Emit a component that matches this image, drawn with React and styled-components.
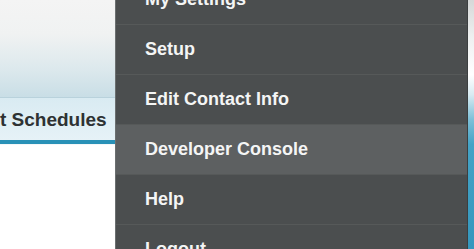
import React from "react";
import styled, { createGlobalStyle } from "styled-components";

const GlobalStyle = createGlobalStyle`
  html, body {
    margin: 0;
    padding: 0;
    background: #ffffff;
    overflow: hidden;
  }
  body {
    font-family: "Liberation Sans", Arial, Helvetica, sans-serif;
  }
`;

const Page = styled.div`
  position: relative;
  width: 474px;
  height: 249px;
  overflow: hidden;
  display: flex;
`;

const Main = styled.div`
  flex: 1;
  min-width: 0;
  display: flex;
  flex-direction: column;
`;

const Header = styled.div`
  height: 97px;
  background: linear-gradient(
    to bottom,
    #f4f4f4 0%,
    #f0f2f2 35%,
    #dde9ed 70%,
    #c9dee6 100%
  );
  border-bottom: 1px solid #b9d2dc;
`;

const TabBar = styled.div`
  height: 42px;
  display: flex;
  align-items: center;
  background: linear-gradient(to bottom, #d9ebf2 0%, #e6f2f7 100%);
  border-bottom: 4px solid #2991b7;
`;

const TabLabel = styled.span`
  font-size: 19px;
  font-weight: bold;
  color: #2e3233;
  white-space: nowrap;
  padding-top: 2px;
`;

const Body = styled.div`
  flex: 1;
  background: #ffffff;
  border-top: 1px solid #f3f7f8;
`;

const EdgeStrip = styled.div`
  flex: 0 0 6px;
  width: 6px;
  height: 100%;
  background: linear-gradient(
    to bottom,
    #d6d8d8 0%,
    #eef0f0 15%,
    #ffffff 30%,
    #d8ebf2 38%,
    #7dc0d8 48%,
    #44a3c6 58%,
    #3597bd 100%
  );
`;

const Menu = styled.ul`
  position: absolute;
  left: 115px;
  top: -26px;
  width: 353px;
  box-sizing: border-box;
  margin: 0;
  padding: 0;
  list-style: none;
  background: #4b4e4f;
  border-left: 1px solid #6b6f70;
  border-right: 1px solid #3c3f40;
`;

const MenuItem = styled.li`
  height: 49px;
  display: flex;
  align-items: center;
  padding-left: 29px;
  font-size: 18px;
  font-weight: bold;
  color: #f4f5f5;
  background: ${(props) => (props.$active ? "#5d6061" : "#4b4e4f")};
  border-top: 1px solid #565959;

  &:first-child {
    border-top-color: #4b4e4f;
  }
`;

const items = [
  "My Settings",
  "Setup",
  "Edit Contact Info",
  "Developer Console",
  "Help",
  "Logout",
];

const App = () => {
  return (
    <>
      <GlobalStyle />
      <Page>
        <Main>
          <Header />
          <TabBar>
            <TabLabel>t Schedules</TabLabel>
          </TabBar>
          <Body />
        </Main>
        <EdgeStrip />
        <Menu>
          {items.map((item) => (
            <MenuItem key={item} $active={item === "Developer Console"}>
              {item}
            </MenuItem>
          ))}
        </Menu>
      </Page>
    </>
  );
};

export default App;
